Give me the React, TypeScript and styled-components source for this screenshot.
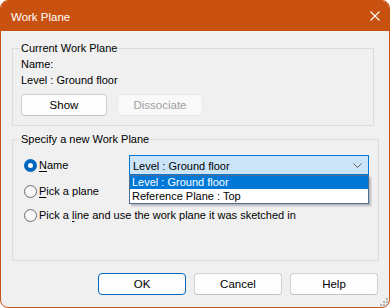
import React from 'react';
import styled, { createGlobalStyle } from 'styled-components';

const GlobalStyle = createGlobalStyle`
  html, body {
    margin: 0;
    padding: 0;
    background: #ffffff;
  }
  body {
    font-family: 'Liberation Sans', Arial, sans-serif;
    font-size: 11px;
    line-height: 16px;
    color: #000000;
  }
  * {
    box-sizing: border-box;
  }
`;

const accent = '#c9510f';

const Window = styled.div`
  position: relative;
  width: 390px;
  height: 308px;
  display: flex;
  flex-direction: column;
  background: #f0f0f0;
  border: 1px solid ${accent};
  border-radius: 8px;
  overflow: hidden;
`;

const TitleBar = styled.div`
  height: 30px;
  flex: none;
  display: flex;
  align-items: center;
  justify-content: space-between;
  padding: 0 9px 0 10px;
  background: ${accent};
  color: #ffffff;
  font-size: 11.5px;
`;

const Title = styled.span`
  padding-top: 1px;
`;

const Body = styled.div`
  flex: 1;
  padding: 9px 10px 0 11px;
`;

const Group = styled.fieldset<{ $inset?: number; $bottom: number }>`
  margin: 0 ${(p) => p.$inset ?? 0}px 0 0;
  padding: 0 8px ${(p) => p.$bottom}px 8px;
  min-inline-size: 0;
  border: 1px solid #dcdcdc;
  & + & {
    margin-top: 5px;
  }
`;

const Legend = styled.legend`
  padding: 0 1px;
  margin-left: -1px;
  line-height: 16px;
`;

const InfoLines = styled.div`
  display: flex;
  flex-direction: column;
`;

const ButtonRow = styled.div`
  display: flex;
  gap: 10px;
  margin-top: 6px;
`;

const Button = styled.button<{ $primary?: boolean }>`
  width: ${(p) => (p.$primary === undefined ? 86 : 88)}px;
  height: 22px;
  padding: 0;
  font: inherit;
  font-size: 11.5px;
  color: #000000;
  background: #fdfdfd;
  border: 1px solid ${(p) => (p.$primary ? '#0067c0' : '#d0d0d0')};
  border-bottom-color: ${(p) => (p.$primary ? '#0067c0' : '#c2c2c2')};
  border-radius: 4px;

  &:disabled {
    color: #a0a0a0;
    background: #f9f9f9;
    border-color: #e6e6e6;
  }
`;

const Options = styled.div`
  display: flex;
  flex-direction: column;
  gap: 8px;
  padding-top: 8px;
`;

const OptionRow = styled.div<{ $tall?: boolean }>`
  display: flex;
  align-items: center;
  height: ${(p) => (p.$tall ? 20 : 16)}px;
`;

const RadioLabel = styled.label`
  display: flex;
  align-items: center;
  gap: 2px;
  width: 108px;
  white-space: nowrap;
`;

const Mnemonic = styled.span`
  text-decoration: underline;
  text-underline-offset: 2px;
`;

const RadioDot = styled.span<{ $checked?: boolean }>`
  width: 13px;
  height: 13px;
  margin-left: 3px;
  flex: none;
  border-radius: 50%;
  background: ${(p) => (p.$checked ? '#ffffff' : '#f6f6f6')};
  border: ${(p) => (p.$checked ? '4px solid #0067c0' : '1px solid #6a6a6a')};
`;

const ComboWrap = styled.div`
  position: relative;
`;

const Combo = styled.div`
  width: 240px;
  height: 20px;
  display: flex;
  align-items: center;
  justify-content: space-between;
  padding: 1px 6px 0 3px;
  background: #cce4f7;
  border: 1px solid #0078d4;
`;

const DropList = styled.ul`
  position: absolute;
  top: 100%;
  left: 0;
  width: 240px;
  margin: 0;
  padding: 0;
  list-style: none;
  background: #ffffff;
  border: 1px solid #4d6d92;
  box-shadow: 2px 2px 2px rgba(0, 0, 0, 0.25);
  z-index: 2;
`;

const DropItem = styled.li<{ $selected?: boolean }>`
  height: 13px;
  line-height: 13px;
  padding-left: 2px;
  background: ${(p) => (p.$selected ? '#0078d7' : 'transparent')};
  color: ${(p) => (p.$selected ? '#ffffff' : '#000000')};
  & + & {
    height: 14px;
    line-height: 14px;
  }
`;

const Footer = styled.div`
  display: flex;
  justify-content: flex-end;
  gap: 8px;
  margin-top: 12px;
  padding-right: 1px;
`;

const Grip = styled.svg`
  position: absolute;
  right: 1px;
  bottom: 1px;
`;

function CloseIcon() {
  return (
    <svg width="10" height="10" viewBox="0 0 10 10">
      <path d="M0.5 0.5 L9.5 9.5 M9.5 0.5 L0.5 9.5" stroke="#ffffff" strokeWidth="1.1" />
    </svg>
  );
}

function Chevron() {
  return (
    <svg width="9" height="5" viewBox="0 0 9 5">
      <path d="M0.5 0.5 L4.5 4.5 L8.5 0.5" stroke="#606060" strokeWidth="1" fill="none" />
    </svg>
  );
}

export default function App() {
  return (
    <>
      <GlobalStyle />
      <Window>
        <TitleBar>
          <Title>Work Plane</Title>
          <CloseIcon />
        </TitleBar>
        <Body>
          <Group $inset={5} $bottom={9}>
            <Legend>Current Work Plane</Legend>
            <InfoLines>
              <span>Name:</span>
              <span>Level : Ground floor</span>
            </InfoLines>
            <ButtonRow>
              <Button type="button">Show</Button>
              <Button type="button" disabled>
                Dissociate
              </Button>
            </ButtonRow>
          </Group>
          <Group $bottom={37}>
            <Legend>Specify a new Work Plane</Legend>
            <Options>
              <OptionRow $tall>
                <RadioLabel>
                  <RadioDot $checked />
                  <span>
                    <Mnemonic>N</Mnemonic>ame
                  </span>
                </RadioLabel>
                <ComboWrap>
                  <Combo>
                    <span>Level : Ground floor</span>
                    <Chevron />
                  </Combo>
                  <DropList>
                    <DropItem $selected>Level : Ground floor</DropItem>
                    <DropItem>Reference Plane : Top</DropItem>
                  </DropList>
                </ComboWrap>
              </OptionRow>
              <OptionRow>
                <RadioLabel>
                  <RadioDot />
                  <span>
                    <Mnemonic>P</Mnemonic>ick a plane
                  </span>
                </RadioLabel>
              </OptionRow>
              <OptionRow>
                <RadioLabel>
                  <RadioDot />
                  <span>
                    Pick a <Mnemonic>l</Mnemonic>ine and use the work plane it was sketched in
                  </span>
                </RadioLabel>
              </OptionRow>
            </Options>
          </Group>
          <Footer>
            <Button type="button" $primary>
              OK
            </Button>
            <Button type="button" $primary={false}>
              Cancel
            </Button>
            <Button type="button" $primary={false}>
              Help
            </Button>
          </Footer>
        </Body>
        <Grip width="9" height="9" viewBox="0 0 9 9">
          {[
            [7, 1],
            [4, 4],
            [7, 4],
            [1, 7],
            [4, 7],
            [7, 7],
          ].map(([x, y]) => (
            <rect key={`${x}-${y}`} x={x} y={y} width="2" height="2" fill="#b4b4b4" />
          ))}
        </Grip>
      </Window>
    </>
  );
}
